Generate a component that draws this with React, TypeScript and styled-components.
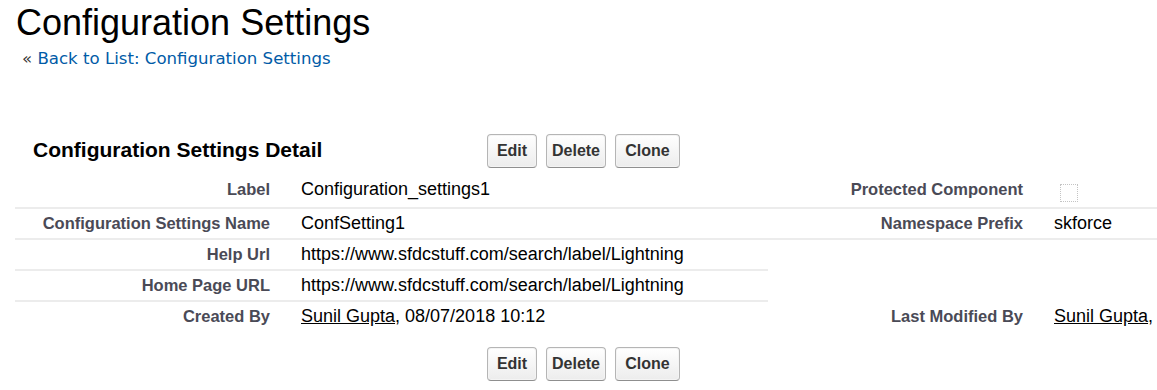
import React from 'react';
import styled, { createGlobalStyle } from 'styled-components';

const GlobalStyle = createGlobalStyle`
  html, body {
    margin: 0;
    padding: 0;
    background: #fff;
    overflow: hidden;
  }
  body {
    font-family: "Liberation Sans", Arial, sans-serif;
    color: #000;
  }
`;

const Page = styled.div`
  width: 100%;
  overflow: hidden;
`;

const PageTitle = styled.h1`
  margin: 3px 0 0 16px;
  font-size: 36px;
  line-height: 40px;
  font-weight: 400;
  color: #000;
`;

const BackRow = styled.div`
  margin: 6px 0 0 22px;
  font-family: "DejaVu Sans", Verdana, sans-serif;
  font-size: 16.6px;
  line-height: 20px;
  color: #333;
`;

const BackLink = styled.a`
  color: #015ba7;
  text-decoration: none;
`;

const DetailBlock = styled.section`
  width: 1506px;
  margin: 65px 0 0 15px;
`;

const ButtonBar = styled.div<{ $bottom?: boolean }>`
  display: grid;
  grid-template-columns: 472px auto;
  align-items: center;
  height: 34px;
  margin-top: ${(p) => (p.$bottom ? '14px' : '0')};
`;

const BlockTitle = styled.h2`
  margin: 0 0 3px 18px;
  font-size: 21px;
  line-height: 30px;
  font-weight: 700;
  color: #000;
`;

const Buttons = styled.div`
  display: flex;
  gap: 9px;
`;

const Button = styled.button<{ $w: number }>`
  box-sizing: border-box;
  width: ${(p) => p.$w}px;
  height: 34px;
  padding: 0;
  font-family: "Liberation Sans", Arial, sans-serif;
  font-size: 16px;
  font-weight: 700;
  color: #333;
  background: linear-gradient(#ffffff, #ececec);
  border: 1px solid #b5b5b5;
  border-bottom-color: #8f8f8f;
  border-radius: 4px;
  box-shadow: inset 0 0 0 1px #f4f4f4;
  cursor: pointer;
`;

const DetailGrid = styled.div`
  display: grid;
  grid-template-columns: 271px 482px 271px 482px;
  margin-top: 7px;
`;

const Cell = styled.div<{ $line?: boolean; $tall?: boolean }>`
  box-sizing: border-box;
  height: ${(p) => (p.$tall ? 34 : 31)}px;
  padding-top: 4px;
  line-height: 21px;
  white-space: nowrap;
  border-bottom: 2px solid ${(p) => (p.$line ? '#ececec' : 'transparent')};
`;

const LabelCell = styled(Cell)`
  padding-right: 16px;
  text-align: right;
  font-size: 16.5px;
  font-weight: 700;
  color: #4a4a56;
`;

const DataCell = styled(Cell)`
  padding-left: 15px;
  font-size: 18px;
  color: #000;
`;

const UserLink = styled.a`
  color: #000;
  text-decoration: underline;
`;

const Checkbox = styled.span`
  display: inline-block;
  box-sizing: border-box;
  width: 18px;
  height: 18px;
  margin: 5px 0 0 6px;
  border: 1px dotted #c4c4c4;
  vertical-align: top;
`;

type Field = { label: string; value: React.ReactNode };
type Row = { left: Field; right?: Field; line: boolean; rightLine?: boolean; tall?: boolean };

const rows: Row[] = [
  {
    left: { label: 'Label', value: 'Configuration_settings1' },
    right: { label: 'Protected Component', value: <Checkbox /> },
    line: true,
    rightLine: true,
    tall: true,
  },
  {
    left: { label: 'Configuration Settings Name', value: 'ConfSetting1' },
    right: { label: 'Namespace Prefix', value: 'skforce' },
    line: true,
    rightLine: true,
  },
  {
    left: { label: 'Help Url', value: 'https://www.sfdcstuff.com/search/label/Lightning' },
    line: true,
  },
  {
    left: { label: 'Home Page URL', value: 'https://www.sfdcstuff.com/search/label/Lightning' },
    line: true,
  },
  {
    left: {
      label: 'Created By',
      value: (
        <>
          <UserLink href="#">Sunil Gupta</UserLink>, 08/07/2018 10:12
        </>
      ),
    },
    right: {
      label: 'Last Modified By',
      value: (
        <>
          <UserLink href="#">Sunil Gupta</UserLink>,
        </>
      ),
    },
    line: false,
  },
];

function ActionButtons() {
  return (
    <Buttons>
      <Button $w={50}>Edit</Button>
      <Button $w={60}>Delete</Button>
      <Button $w={65}>Clone</Button>
    </Buttons>
  );
}

export default function App() {
  return (
    <Page>
      <GlobalStyle />
      <PageTitle>Configuration Settings</PageTitle>
      <BackRow>
        « <BackLink href="#">Back to List: Configuration Settings</BackLink>
      </BackRow>

      <DetailBlock>
        <ButtonBar>
          <BlockTitle>Configuration Settings Detail</BlockTitle>
          <ActionButtons />
        </ButtonBar>

        <DetailGrid>
          {rows.map((r, i) => (
            <React.Fragment key={i}>
              <LabelCell $line={r.line} $tall={r.tall}>{r.left.label}</LabelCell>
              <DataCell $line={r.line} $tall={r.tall}>{r.left.value}</DataCell>
              <LabelCell $line={r.rightLine} $tall={r.tall}>{r.right?.label}</LabelCell>
              <DataCell $line={r.rightLine} $tall={r.tall}>{r.right?.value}</DataCell>
            </React.Fragment>
          ))}
        </DetailGrid>

        <ButtonBar $bottom>
          <span />
          <ActionButtons />
        </ButtonBar>
      </DetailBlock>
    </Page>
  );
}
